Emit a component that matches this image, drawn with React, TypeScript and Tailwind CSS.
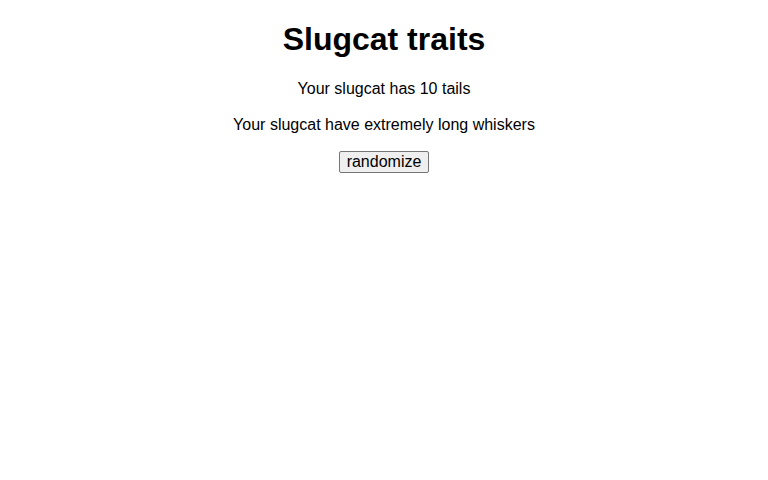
import { useState } from "react";

const traits = [
  "Your slugcat has 10 tails",
  "Your slugcat have extremely long whiskers",
];

export default function App() {
  const [lines] = useState(traits);

  return (
    <div className="text-center text-black font-['Liberation_Sans',Arial,sans-serif] min-h-[480px] bg-white">
      <h1 className="text-[32px] leading-[37px] font-bold pt-[21px]">Slugcat traits</h1>
      <p className="mt-[22px] text-base leading-[18px]">{lines[0]}</p>
      <p className="mt-[18px] text-base leading-[18px]">{lines[1]}</p>
      <div className="mt-[16px]">
        <button className="px-[7px] py-[1px] text-base leading-[18px] bg-[#efefef] border border-[#767676] rounded-[2px]">
          randomize
        </button>
      </div>
    </div>
  );
}
